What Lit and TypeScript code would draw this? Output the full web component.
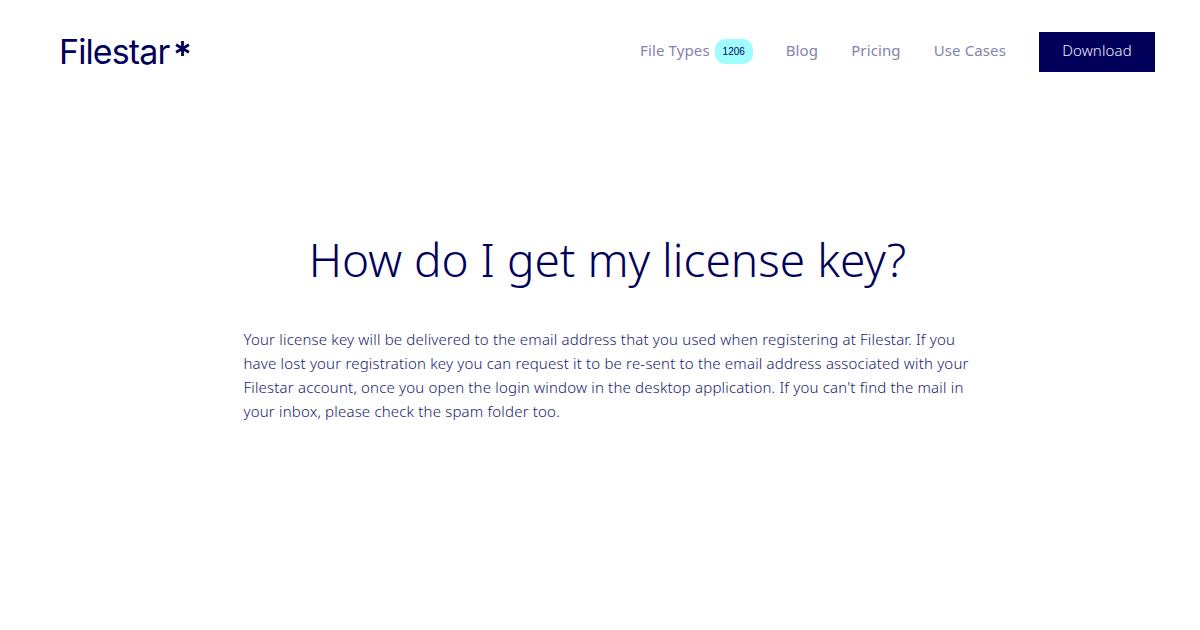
import { LitElement, html, css } from "lit";
import { customElement } from "lit/decorators.js";

@customElement("app-root")
export class AppRoot extends LitElement {
  static styles = css`
    :host { display: block; width: 1200px; height: 630px; background: #fff; overflow: hidden; font-family: "Noto Sans", "Liberation Sans", sans-serif; color: #00005a; }
    .page { display: flex; flex-direction: column; padding: 32px 45px 0 60px; }
    header { display: flex; align-items: center; justify-content: space-between; height: 40px; }
    .logo { display: flex; align-items: flex-start; font-size: 34px; line-height: 40px; font-weight: 400; letter-spacing: -0.9px; font-family: "Inter", sans-serif; margin-left: -1px; }
    .logo svg { margin: 9px 0 0 6px; }
    nav { display: flex; align-items: center; gap: 33px; font-size: 15px; color: #8383ad; letter-spacing: 0.12px; }
    .txt { padding-bottom: 4px; }
    .ft { display: flex; align-items: center; gap: 5px; }
    .badge { background: #9ffcff; color: #00005a; font-size: 10px; height: 25px; width: 38px; margin-bottom: 2px; border-radius: 10px; display: flex; align-items: center; justify-content: center; font-family: "Liberation Sans", sans-serif; letter-spacing: 0; }
    .btn { background: #00005a; color: #eeeefa; width: 116px; height: 40px; display: flex; align-items: center; justify-content: center; font-weight: 300; }
    main { display: flex; flex-direction: column; align-items: center; padding-top: 159px; }
    h1 { margin: 0; font-size: 46px; line-height: 56px; font-weight: 300; }
    p { margin: 40px 0 0; width: 728px; font-size: 15px; line-height: 24px; color: #1a1a6b; font-weight: 300; letter-spacing: 0.18px; }
  `;
  render() {
    return html`
      <div class="page">
        <header>
          <div class="logo">Filestar<svg width="15" height="15" viewBox="0 0 14 14"><path d="M7 0v14M1 3.5l12 7M13 3.5l-12 7" stroke="#00005a" stroke-width="2.6"/></svg></div>
          <nav>
            <div class="ft"><span class="txt">File Types</span><span class="badge">1206</span></div>
            <span class="txt">Blog</span><span class="txt">Pricing</span><span class="txt">Use Cases</span>
            <div class="btn"><span class="txt">Download</span></div>
          </nav>
        </header>
        <main>
          <h1>How do I get my license key?</h1>
          <p>Your license key will be delivered to the email address that you used when registering at Filestar. If you have lost your registration key you can request it to be re-sent to the email address associated with your Filestar account, once you open the login window in the desktop application. If you can't find the mail in your inbox, please check the spam folder too.</p>
        </main>
      </div>
    `;
  }
}
